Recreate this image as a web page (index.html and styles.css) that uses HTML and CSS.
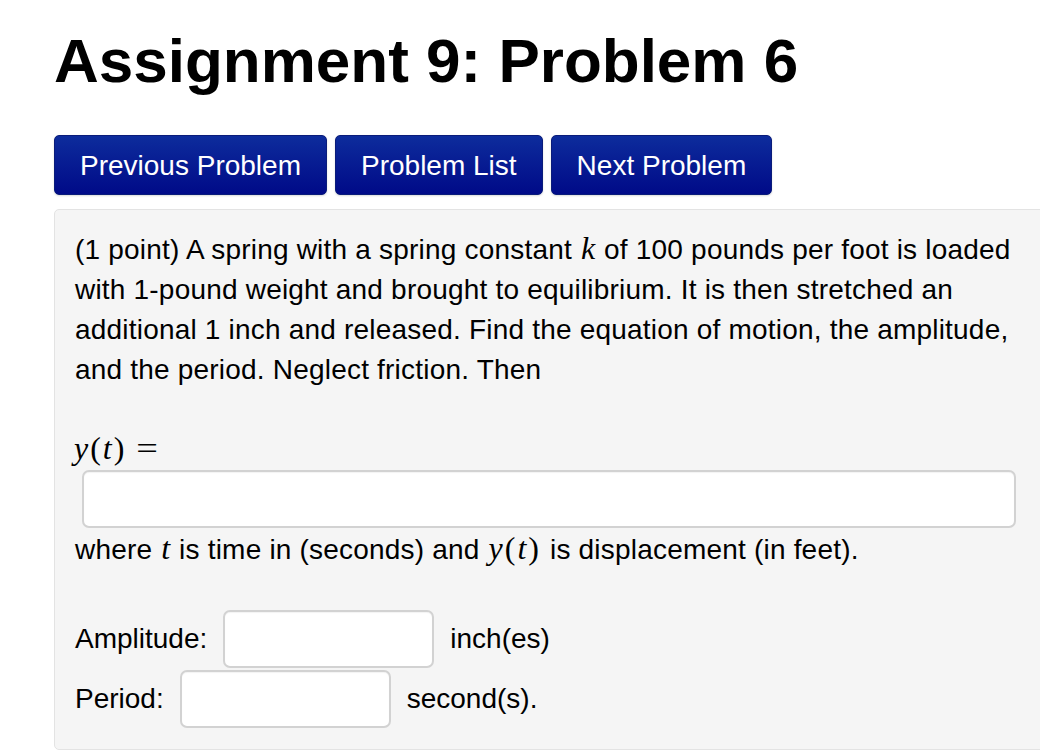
FILE: index.html
```html
<!DOCTYPE html>
<html lang="en">
<head>
<meta charset="utf-8">
<title>Assignment 9: Problem 6</title>
<link rel="stylesheet" href="styles.css">
</head>
<body>
<div class="page">
  <h1 class="title">Assignment 9: Problem 6</h1>
  <div class="nav">
    <a class="btn" href="#">Previous Problem</a>
    <a class="btn" href="#">Problem List</a>
    <a class="btn" href="#">Next Problem</a>
  </div>
  <div class="well">
    <div class="text">(1 point) A spring with a spring constant <span class="math inline"><span class="mi">k</span></span> of 100 pounds per foot is loaded with 1-pound weight and brought to equilibrium. It is then stretched an additional 1 inch and released. Find the equation of motion, the amplitude, and the period. Neglect friction. Then</div>
    <div class="blank"></div>
    <div class="math-line"><span class="math"><span class="mi">y</span><span class="mo">(</span><span class="mi">t</span><span class="mo">)</span><span class="eq">=</span></span></div>
    <input class="answer wide" type="text">
    <div class="text">where <span class="math inline"><span class="mi">t</span></span> is time in (seconds) and <span class="math inline"><span class="mi">y</span><span class="mo">(</span><span class="mi">t</span><span class="mo">)</span></span> is displacement (in feet).</div>
    <div class="blank"></div>
    <div class="row">
      <span class="label">Amplitude:</span>
      <input class="answer short" type="text">
      <span class="unit">inch(es)</span>
    </div>
    <div class="row">
      <span class="label">Period:</span>
      <input class="answer short" type="text">
      <span class="unit">second(s).</span>
    </div>
  </div>
</div>
</body>
</html>
```
FILE: styles.css
```css
html, body {
  margin: 0;
  padding: 0;
  overflow: hidden;
  background: #fff;
}
body {
  font-family: "Liberation Sans", Arial, Helvetica, sans-serif;
  color: #000;
}
.page {
  padding-left: 54px;
}
.title {
  font-size: 62px;
  font-weight: bold;
  line-height: 69px;
  margin: 26px 0 40px 0;
}
.nav {
  display: flex;
  gap: 8px;
}
.btn {
  display: block;
  height: 58px;
  line-height: 60px;
  padding: 0 25px;
  font-size: 28px;
  color: #fff;
  text-decoration: none;
  border: 1px solid #0a1c7a;
  border-radius: 5px;
  background: linear-gradient(#0d2c9c, #000a88);
  box-shadow: 0 1px 2px rgba(0,0,0,0.15);
}
.well {
  margin-top: 14px;
  width: 955px;
  padding: 20px 20px 19px 20px;
  background: #f5f5f5;
  border: 1px solid #e3e3e3;
  border-radius: 5px;
  font-size: 28px;
  line-height: 40px;
}
.text {
  letter-spacing: 0.2px;
}
.blank {
  height: 40px;
}
.math {
  font-family: "Liberation Serif", "Times New Roman", serif;
  font-size: 32px;
  line-height: 1;
  letter-spacing: 0;
}
.math.inline {
  margin: 0 1px 0 1px;
}
.mi {
  font-style: italic;
}
.mo {
  margin: 0 2px;
}
.eq {
  display: inline-block;
  margin-left: 12px;
  transform: scaleX(1.2);
}
.math-line {
  height: 40px;
  line-height: 40px;
  margin-left: -1px;
}
.answer {
  box-sizing: border-box;
  background: #fff;
  border: 2px solid #d2d2d2;
  border-radius: 7px;
  box-shadow: inset 0 1px 1px rgba(0,0,0,0.05);
  font-size: 28px;
  padding: 0 10px;
  outline: none;
}
.wide {
  display: block;
  width: 934px;
  height: 58px;
  margin: 0 0 2px 7px;
}
.row {
  display: flex;
  align-items: center;
  height: 58px;
  margin-bottom: 2px;
}
.short {
  width: 211px;
  height: 58px;
  margin: 0 16px 0 16px;
}
```
